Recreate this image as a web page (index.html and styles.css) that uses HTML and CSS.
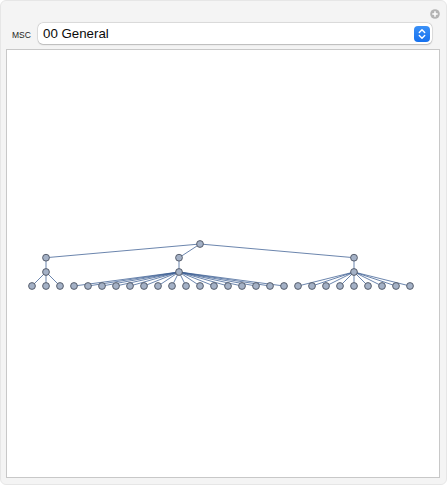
FILE: index.html
```html
<!DOCTYPE html>
<html>
<head>
<meta charset="utf-8">
<link rel="stylesheet" href="styles.css">
</head>
<body>
<div class="panel">
  <div class="toprow">
    <svg class="plus" width="10" height="10" viewBox="0 0 10 10">
      <circle cx="5" cy="5" r="4.8" fill="#b4b4b4"/>
      <path d="M5 2.3V7.7M2.3 5H7.7" stroke="#fff" stroke-width="1.5"/>
    </svg>
  </div>
  <div class="controlrow">
    <span class="label">MSC</span>
    <div class="select">
      <span class="value">00 General</span>
      <span class="stepper">
        <svg width="16" height="16" viewBox="0 0 16 16">
          <path d="M5.3 6.4L8 3.8L10.7 6.4M5.3 9.6L8 12.2L10.7 9.6" fill="none" stroke="#fff" stroke-width="1.4" stroke-linecap="round" stroke-linejoin="round"/>
        </svg>
      </span>
    </div>
  </div>
  <div class="pane">
    <svg class="graph" id="graph" width="432" height="427" viewBox="7 50 432 427"></svg>
  </div>
</div>
<script src="graph.js"></script>
</body>
</html>
```
FILE: styles.css
```css
html, body {
  margin: 0;
  padding: 0;
  background: #ffffff;
}
.panel {
  width: 447px;
  box-sizing: border-box;
  background: #f4f4f4;
  border: 1px solid #e6e6e6;
  border-radius: 6px;
  padding: 0 6px 6px 5px;
  display: flex;
  flex-direction: column;
  font-family: "Liberation Sans", Arial, sans-serif;
}
.toprow {
  height: 22px;
  display: flex;
  justify-content: flex-end;
  align-items: flex-start;
}
.plus {
  margin-top: 8px;
  margin-right: 0px;
  display: block;
}
.controlrow {
  height: 21px;
  display: flex;
  align-items: center;
  padding-left: 6px;
  padding-right: 8px;
}
.label {
  font-size: 8.5px;
  color: #222;
  width: 26px;
  padding-top: 3px;
}
.select {
  flex: 1;
  height: 21px;
  box-sizing: border-box;
  background: #fff;
  border-radius: 5px;
  box-shadow: 0 0 0 0.5px rgba(0,0,0,0.15), 0 0.5px 1.5px rgba(0,0,0,0.18);
  display: flex;
  align-items: center;
  padding-left: 5px;
  padding-right: 2px;
}
.value {
  flex: 1;
  font-size: 13.3px;
  color: #0a0a0a;
}
.stepper {
  width: 16px;
  height: 16px;
  border-radius: 4px;
  background: linear-gradient(#3b91f7, #1570ee);
  display: block;
}
.stepper svg { display: block; }
.pane {
  margin-top: 5px;
  height: 429px;
  box-sizing: border-box;
  background: #fff;
  border: 1px solid #c8c8c8;
}
.graph { display: block; }
```
FILE: graph.js
```js
(function () {
  var svg = document.getElementById('graph');
  var NS = 'http://www.w3.org/2000/svg';
  var root = [200, 244];
  var mids = [46, 179, 354];
  var y2 = 257.7, y3 = 272, yl = 286;
  var groups = [[0, 3], [3, 19], [19, 28]];
  var edges = [];
  var nodes = [root];
  mids.forEach(function (x, i) {
    edges.push([root, [x, y2]]);
    edges.push([[x, y2], [x, y3]]);
    nodes.push([x, y2]);
    nodes.push([x, y3]);
    for (var k = groups[i][0]; k < groups[i][1]; k++) {
      var lx = 32 + 14 * k;
      edges.push([[x, y3], [lx, yl]]);
      nodes.push([lx, yl]);
    }
  });
  edges.forEach(function (e) {
    var l = document.createElementNS(NS, 'line');
    l.setAttribute('x1', e[0][0]); l.setAttribute('y1', e[0][1]);
    l.setAttribute('x2', e[1][0]); l.setAttribute('y2', e[1][1]);
    l.setAttribute('stroke', '#3d5f93');
    l.setAttribute('stroke-opacity', '0.85');
    l.setAttribute('stroke-width', '0.9');
    svg.appendChild(l);
  });
  nodes.forEach(function (n) {
    var c = document.createElementNS(NS, 'circle');
    c.setAttribute('cx', n[0]); c.setAttribute('cy', n[1]);
    c.setAttribute('r', '3.4');
    c.setAttribute('fill', '#a4b1c6');
    c.setAttribute('stroke', '#4d5462');
    c.setAttribute('stroke-width', '0.9');
    svg.appendChild(c);
  });
})();
```
